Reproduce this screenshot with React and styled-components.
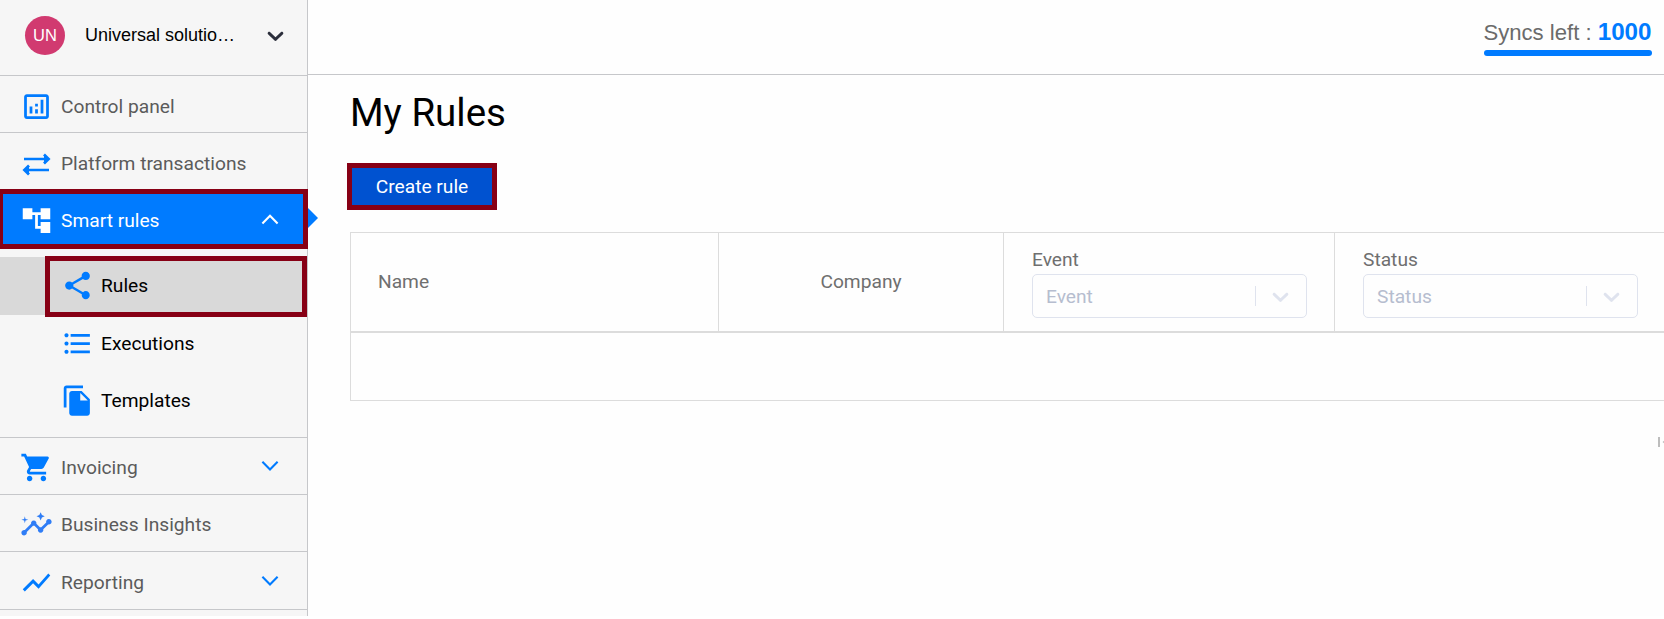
import styled, { createGlobalStyle } from "styled-components";
import {
  MdAccountTree,
  MdFileCopy,
  MdFormatListBulleted,
  MdInsights,
  MdOutlineAnalytics,
  MdShare,
  MdShoppingCart,
  MdShowChart,
} from "react-icons/md";

function SwapIcon() {
  return (
    <svg width="33" height="33" viewBox="0 0 33 33" fill="none">
      <path
        d="M4 12H28M24 7.5L28.6 12L24 16.5M29 23H5M9 18.5L4.4 23L9 27.5"
        stroke="#007bff"
        strokeWidth="2.7"
      />
    </svg>
  );
}

function ThinChevron({ up, color = "#007bff" }) {
  return (
    <Chevron $up={up} width="18" height="12" viewBox="0 0 18 12" fill="none">
      <path
        d={up ? "M1.4 9.4L9 1.8L16.6 9.4" : "M1.4 1.8L9 9.4L16.6 1.8"}
        stroke={color}
        strokeWidth="2.1"
      />
    </Chevron>
  );
}

function BoldChevron({ color }) {
  return (
    <svg width="27" height="27" viewBox="0 0 20 20" fill={color}>
      <path d="M4.516 7.548c0.436-0.446 1.043-0.481 1.576 0l3.908 3.747 3.908-3.747c0.533-0.481 1.141-0.446 1.574 0 0.436 0.445 0.408 1.197 0 1.615-0.406 0.418-4.695 4.502-4.695 4.502-0.217 0.223-0.502 0.335-0.787 0.335s-0.57-0.112-0.789-0.335c0 0-4.287-4.084-4.695-4.502s-0.436-1.17 0-1.615z" />
    </svg>
  );
}

function Filter({ label }) {
  return (
    <FilterCell>
      <FilterLabel>{label}</FilterLabel>
      <Select>
        <Placeholder>{label}</Placeholder>
        <Separator />
        <BoldChevron color="#dfe3ee" />
      </Select>
    </FilterCell>
  );
}

export default function App() {
  return (
    <>
      <GlobalStyle />
      <Page>
        <Sidebar>
          <Account>
            <Avatar>UN</Avatar>
            <AccountName>Universal solutio…</AccountName>
            <BoldChevron color="#2b2e3b" />
          </Account>
          <NavItem $height={57} $drop={5}>
            <MdOutlineAnalytics />
            <NavLabel>Control panel</NavLabel>
          </NavItem>
          <NavItem $height={56} $drop={4} $last>
            <SwapIcon />
            <NavLabel>Platform transactions</NavLabel>
          </NavItem>
          <ActiveItem>
            <MdAccountTree />
            <NavLabel>Smart rules</NavLabel>
            <ThinChevron up color="#fff" />
            <Pointer />
          </ActiveItem>
          <SubMenu>
            <SelectedSubItem>
              <Highlight>
                <MdShare />
                <span>Rules</span>
              </Highlight>
            </SelectedSubItem>
            <SubItem>
              <MdFormatListBulleted />
              <span>Executions</span>
            </SubItem>
            <SubItem>
              <MdFileCopy />
              <span>Templates</span>
            </SubItem>
          </SubMenu>
          <NavItem $height={57} $drop={2}>
            <MdShoppingCart />
            <NavLabel>Invoicing</NavLabel>
            <ThinChevron />
          </NavItem>
          <NavItem $height={57} $drop={2} $tint="#2f7df6">
            <MdInsights />
            <NavLabel>Business Insights</NavLabel>
          </NavItem>
          <NavItem $height={58} $drop={3}>
            <MdShowChart />
            <NavLabel>Reporting</NavLabel>
            <ThinChevron />
          </NavItem>
        </Sidebar>
        <Main>
          <TopBar>
            <Syncs>
              <SyncsText>
                Syncs left : <b>1000</b>
              </SyncsText>
              <SyncsBar />
            </Syncs>
          </TopBar>
          <Content>
            <Title>My Rules</Title>
            <CreateButton>Create rule</CreateButton>
            <Table>
              <HeaderRow>
                <HeaderCell>Name</HeaderCell>
                <HeaderCell $center>Company</HeaderCell>
                <Filter label="Event" />
                <Filter label="Status" />
              </HeaderRow>
              <EmptyRow />
            </Table>
            <Pager>
              <svg width="6" height="10" viewBox="0 0 6 10" fill="#bdbdbd">
                <path d="M0 0h2v10H0zM4.5 5L6 3.7v2.6z" />
              </svg>
            </Pager>
          </Content>
        </Main>
      </Page>
    </>
  );
}

const GlobalStyle = createGlobalStyle`
  * {
    box-sizing: border-box;
  }
  body {
    margin: 0;
    background: #fff;
    font-family: Roboto, "Liberation Sans", sans-serif;
    font-size: 19.2px;
    overflow: hidden;
  }
`;

const Page = styled.div`
  display: flex;
  width: 1664px;
  height: 616px;
`;

const Sidebar = styled.nav`
  flex: none;
  width: 308px;
  border-right: 1px solid #c6c7ca;
  background: #f6f6f6;
`;

const Account = styled.div`
  display: flex;
  align-items: center;
  height: 76px;
  padding: 0 18px 4px 25px;
  border-bottom: 1px solid #c6c7ca;
  font-family: "Liberation Sans", Arial, sans-serif;
`;

const Avatar = styled.div`
  display: flex;
  align-items: center;
  justify-content: center;
  width: 40px;
  height: 39px;
  border-radius: 50%;
  background: #d13a70;
  color: #fff;
  font-size: 16.5px;
`;

const AccountName = styled.div`
  flex: 1;
  padding-left: 20px;
  color: #000;
  font-size: 18px;
  white-space: nowrap;
`;

const NavItem = styled.div`
  display: flex;
  align-items: center;
  height: ${({ $height }) => $height}px;
  padding: ${({ $drop }) => $drop}px 28px 0 20px;
  border-bottom: ${({ $last }) => ($last ? "none" : "1px solid #c6c7ca")};
  color: #5b5b5b;

  > svg:first-child {
    flex: none;
    width: 33px;
    height: 33px;
    fill: ${({ $tint }) => $tint || "#007bff"};
  }
`;

const NavLabel = styled.span`
  flex: 1;
  padding-left: 8px;
  white-space: nowrap;
`;

const Chevron = styled.svg`
  flex: none;
  margin-bottom: ${({ $up }) => ($up ? 1 : 3)}px;
`;

const ActiveItem = styled(NavItem).attrs({ $height: 60, $drop: 3, $last: true })`
  position: relative;
  width: 308px;
  padding: 3px 24px 0 17px;
  border: 5px solid #870015;
  border-left-width: 3px;
  background: #007bff;
  color: #fff;

  > svg:first-child {
    fill: #fff;
  }
`;

const Pointer = styled.i`
  position: absolute;
  left: 305px;
  top: 14px;
  border: 10px solid transparent;
  border-left-color: #007bff;
  border-right-width: 0;
`;

const SubMenu = styled.div`
  height: 189px;
  padding-top: 8px;
  border-bottom: 1px solid #c6c7ca;
  color: #000;

  svg {
    flex: none;
    width: 33px;
    height: 33px;
    fill: #007bff;
  }
`;

const SubItem = styled.div`
  display: flex;
  align-items: center;
  gap: 7px;
  height: 57px;
  padding-left: 61px;
`;

const SelectedSubItem = styled.div`
  height: 58px;
  padding-left: 45px;
  background: #d9d9d9;
`;

const Highlight = styled.div`
  position: relative;
  top: -1px;
  display: flex;
  align-items: center;
  gap: 7px;
  height: 61px;
  padding: 0 0 2px 11px;
  border: 5px solid #870015;
  background: #d9d9d9;
`;

const Main = styled.main`
  flex: 1;
  min-width: 0;
  background: #fefefe;
`;

const TopBar = styled.header`
  display: flex;
  justify-content: flex-end;
  height: 75px;
  padding: 17px 12.5px 0 0;
  border-bottom: 1px solid #c6c7ca;
`;

const Syncs = styled.div`
  width: 168px;
  font-family: "Liberation Sans", Arial, sans-serif;
`;

const SyncsText = styled.div`
  height: 33px;
  color: #6b6b6b;
  font-size: 22.1px;
  line-height: 30px;
  text-align: right;
  white-space: nowrap;

  b {
    color: #007bff;
    font-size: 24.2px;
  }
`;

const SyncsBar = styled.div`
  height: 6px;
  border-radius: 3px;
  background: #007bff;
`;

const Content = styled.section`
  display: flex;
  flex-direction: column;
  align-items: flex-start;
  padding-left: 42px;
`;

const Title = styled.h1`
  margin: 14px 0 27px;
  color: #000;
  font-size: 38.5px;
  font-weight: 400;
  line-height: 47px;
`;

const CreateButton = styled.button`
  width: 150px;
  height: 47px;
  margin-left: -3px;
  padding: 0;
  border: 5px solid #870015;
  background: #0052d0;
  color: #fff;
  font: 400 19.2px Roboto, sans-serif;
`;

const Table = styled.div`
  width: 100%;
  margin-top: 22px;
  border: 1px solid #dcdcdc;
  border-right: none;
  color: #6f6f6f;
`;

const HeaderRow = styled.div`
  display: grid;
  grid-template-columns: 368px 285px 331px 1fr;
  height: 100px;
  border-bottom: 2px solid #dcdcdc;
`;

const HeaderCell = styled.div`
  display: flex;
  align-items: center;
  justify-content: ${({ $center }) => ($center ? "center" : "flex-start")};
  padding: 0 0 2px ${({ $center }) => ($center ? 0 : 27)}px;
  border-right: 1px solid #dcdcdc;
`;

const FilterCell = styled.div`
  padding: 16px 0 0 28px;
  border-right: 1px solid #dcdcdc;

  &:last-child {
    border-right: none;
  }
`;

const FilterLabel = styled.div`
  height: 25px;
  line-height: 22px;
`;

const Select = styled.div`
  display: flex;
  align-items: center;
  width: 275px;
  height: 44px;
  padding: 0 12px 0 13px;
  border: 1px solid #dfe3ee;
  border-radius: 5px;
`;

const Placeholder = styled.span`
  flex: 1;
  color: #b6bdcf;
`;

const Separator = styled.span`
  width: 1px;
  height: 20px;
  margin-right: 11px;
  background: #dfe3ee;
`;

const EmptyRow = styled.div`
  height: 67px;
`;

const Pager = styled.div`
  display: flex;
  align-self: flex-end;
  margin-top: 36px;
`;
